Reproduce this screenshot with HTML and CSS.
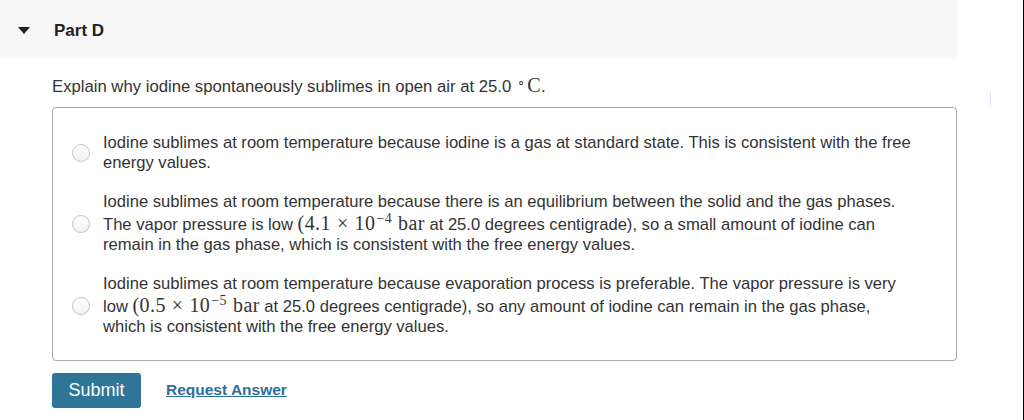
FILE: index.html
```html
<!DOCTYPE html>
<html lang="en">
<head>
<meta charset="utf-8">
<title>Part D</title>
<link rel="stylesheet" href="styles.css">
</head>
<body>
<div class="page">
  <div class="main">
    <div class="part-header">
      <span class="caret"></span>
      <h2 class="part-title">Part D</h2>
    </div>
    <div class="content">
      <p class="question">Explain why iodine spontaneously sublimes in open air at 25.0 <span class="math q-math"><sup class="deg">∘</sup><span class="mi">C</span></span>.</p>
      <div class="options">
        <label class="option">
          <span class="radio"></span>
          <span class="option-text">Iodine sublimes at room temperature because iodine is a gas at standard state. This is consistent with the free energy values.</span>
        </label>
        <label class="option">
          <span class="radio"></span>
          <span class="option-text">Iodine sublimes at room temperature because there is an equilibrium between the solid and the gas phases. The vapor pressure is low <span class="math"><span class="mn">(4.1</span><span class="mo">×</span><span class="mn">10</span><sup class="exp">−4</sup><span class="mi unit">bar</span></span> at 25.0 degrees centigrade), so a small amount of iodine can remain in the gas phase, which is consistent with the free energy values.</span>
        </label>
        <label class="option">
          <span class="radio"></span>
          <span class="option-text">Iodine sublimes at room temperature because evaporation process is preferable. The vapor pressure is very low <span class="math"><span class="mn">(0.5</span><span class="mo">×</span><span class="mn">10</span><sup class="exp">−5</sup><span class="mi unit">bar</span></span> at 25.0 degrees centigrade), so any amount of iodine can remain in the gas phase, which is consistent with the free energy values.</span>
        </label>
      </div>
      <div class="actions">
        <button class="submit" type="button">Submit</button>
        <a class="request" href="#">Request Answer</a>
      </div>
    </div>
  </div>
  <div class="side">
    <span class="cursor"></span>
  </div>
</div>
</body>
</html>
```
FILE: styles.css
```css
* { box-sizing: border-box; }
html, body { margin: 0; padding: 0; background: #fff; }
body {
  font-family: "Liberation Sans", Arial, Helvetica, sans-serif;
  color: #333;
}
.page {
  display: flex;
  width: 1024px;
  height: 420px;
  border-right: 1px solid #000;
  overflow: hidden;
}
.main { width: 957px; flex: none; }
.side { flex: 1; padding: 92px 0 0 33px; }
.cursor { display: block; width: 1px; height: 14px; background: #e6d6ff; }

.part-header {
  display: flex;
  align-items: center;
  height: 59px;
  background: #f8f8f8;
  padding-left: 18px;
  padding-top: 2px;
}
.caret {
  width: 0; height: 0;
  border-left: 6.5px solid transparent;
  border-right: 6.5px solid transparent;
  border-top: 7px solid #222;
  margin-right: 24px;
}
.part-title {
  margin: 0;
  font-size: 17px;
  font-weight: bold;
  color: #222;
}
.content { padding-left: 52px; }
.question {
  margin: 0;
  padding-top: 16px;
  font-size: 16.7px;
  line-height: 20px;
  height: 48px;
}
.math {
  font-family: "Liberation Serif", "Times New Roman", serif;
  font-size: 20px;
  line-height: 22px;
  letter-spacing: 0.4px;
}
.q-math { font-size: 20px; line-height: 20px; margin-left: 1px; }
.deg { font-size: 13px; line-height: 1; vertical-align: 6px; margin-right: 2px; }
.exp { font-size: 14px; line-height: 1; vertical-align: 7px; margin-left: 1px; }
.mo { margin: 0 6px; }
.unit { margin-left: 6px; }

.options {
  border: 1px solid #aaa;
  border-radius: 4px;
  padding: 25px 40px 20px 19px;
  display: flex;
  flex-direction: column;
  gap: 19px;
  height: 254px;
}
.option {
  display: flex;
  align-items: center;
  gap: 13px;
  font-size: 16.6px;
  line-height: 20px;
}
.radio {
  flex: none;
  width: 18px;
  height: 18px;
  border-radius: 50%;
  border: 1px solid #c4c4c4;
  background: linear-gradient(#fff, #f2f2f2);
}
.option-text { display: block; }

.actions {
  display: flex;
  align-items: center;
  margin-top: 12px;
}
.submit {
  width: 89px;
  height: 35px;
  border: none;
  border-radius: 3px;
  background: #2e7598;
  color: #fff;
  font-family: inherit;
  font-size: 18px;
  padding: 0;
}
.request {
  margin-left: 25px;
  font-size: 15.5px;
  font-weight: bold;
  color: #2d6f9a;
  text-decoration: underline;
  margin-top: -2px;
}
```
